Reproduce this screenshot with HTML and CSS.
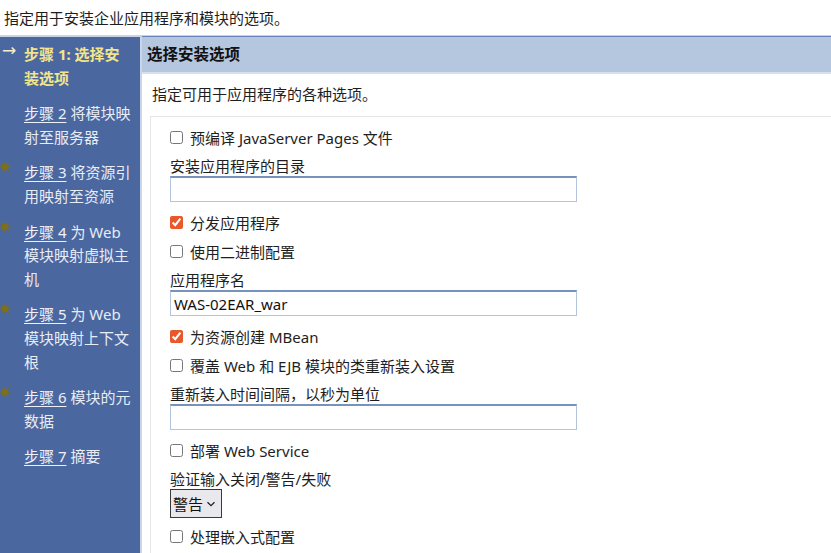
FILE: index.html
```html
<!DOCTYPE html>
<html lang="zh-CN">
<head>
<meta charset="utf-8">
<title>选择安装选项</title>
<link rel="stylesheet" href="styles.css">
</head>
<body>
<p class="intro">指定用于安装企业应用程序和模块的选项。</p>
<div class="main">
  <nav class="steps">
    <div class="step current">
      <span class="marker arrow">→</span>
      <span class="step-text">步骤 1: 选择安装选项</span>
    </div>
    <div class="step">
      <span class="marker"></span>
      <span class="step-text"><a href="#">步骤 2</a> 将模块映射至服务器</span>
    </div>
    <div class="step">
      <span class="marker"><svg class="star" width="12" height="12" viewBox="0 0 12 12"><path d="M6 0L7.2 4.3L12 6L7.2 7.7L6 12L4.8 7.7L0 6L4.8 4.3Z M1.8 1.8L6 4L10.2 1.8L8 6L10.2 10.2L6 8L1.8 10.2L4 6Z"/><circle cx="6" cy="6" r="2.4"/></svg></span>
      <span class="step-text"><a href="#">步骤 3</a> 将资源引用映射至资源</span>
    </div>
    <div class="step">
      <span class="marker"><svg class="star" width="12" height="12" viewBox="0 0 12 12"><path d="M6 0L7.2 4.3L12 6L7.2 7.7L6 12L4.8 7.7L0 6L4.8 4.3Z M1.8 1.8L6 4L10.2 1.8L8 6L10.2 10.2L6 8L1.8 10.2L4 6Z"/><circle cx="6" cy="6" r="2.4"/></svg></span>
      <span class="step-text"><a href="#">步骤 4</a> 为 Web 模块映射虚拟主机</span>
    </div>
    <div class="step">
      <span class="marker"><svg class="star" width="12" height="12" viewBox="0 0 12 12"><path d="M6 0L7.2 4.3L12 6L7.2 7.7L6 12L4.8 7.7L0 6L4.8 4.3Z M1.8 1.8L6 4L10.2 1.8L8 6L10.2 10.2L6 8L1.8 10.2L4 6Z"/><circle cx="6" cy="6" r="2.4"/></svg></span>
      <span class="step-text"><a href="#">步骤 5</a> 为 Web 模块映射上下文根</span>
    </div>
    <div class="step">
      <span class="marker"><svg class="star" width="12" height="12" viewBox="0 0 12 12"><path d="M6 0L7.2 4.3L12 6L7.2 7.7L6 12L4.8 7.7L0 6L4.8 4.3Z M1.8 1.8L6 4L10.2 1.8L8 6L10.2 10.2L6 8L1.8 10.2L4 6Z"/><circle cx="6" cy="6" r="2.4"/></svg></span>
      <span class="step-text"><a href="#">步骤 6</a> 模块的元数据</span>
    </div>
    <div class="step">
      <span class="marker"></span>
      <span class="step-text"><a href="#">步骤 7</a> 摘要</span>
    </div>
  </nav>
  <section class="content">
    <h2 class="header">选择安装选项</h2>
    <p class="desc">指定可用于应用程序的各种选项。</p>
    <div class="box">
      <label class="check"><input type="checkbox"> 预编译 JavaServer Pages 文件</label>
      <div class="field-label">安装应用程序的目录</div>
      <input class="text" type="text" value="">
      <label class="check"><input type="checkbox" checked> 分发应用程序</label>
      <label class="check"><input type="checkbox"> 使用二进制配置</label>
      <div class="field-label">应用程序名</div>
      <input class="text" type="text" value="WAS-02EAR_war">
      <label class="check"><input type="checkbox" checked> 为资源创建 MBean</label>
      <label class="check"><input type="checkbox"> 覆盖 Web 和 EJB 模块的类重新装入设置</label>
      <div class="field-label">重新装入时间间隔，以秒为单位</div>
      <input class="text" type="text" value="">
      <label class="check"><input type="checkbox"> 部署 Web Service</label>
      <div class="field-label">验证输入关闭/警告/失败</div>
      <select class="sel"><option>警告</option><option>关闭</option><option>失败</option></select>
      <label class="check last"><input type="checkbox"> 处理嵌入式配置</label>
    </div>
  </section>
</div>
</body>
</html>
```
FILE: styles.css
```css
html, body {
  margin: 0;
  padding: 0;
  background: #ffffff;
}
body {
  font-family: "Noto Sans", "Noto Sans CJK SC", sans-serif;
  font-size: 15px;
  color: #1e1e1e;
  overflow: hidden;
}
.intro {
  margin: 0;
  padding: 8px 4px 7px;
  line-height: 20px;
  font-size: 15px;
  height: 20px;
}
.main {
  display: flex;
  border-top: 2px solid #c9d3e5;
  min-height: 520px;
}
.steps {
  width: 140px;
  flex: none;
  background: #4b67a0;
  padding: 6px 8px 0 0;
  box-sizing: border-box;
  display: flex;
  flex-direction: column;
  gap: 12px;
}
.step {
  display: grid;
  grid-template-columns: 24px 1fr;
  line-height: 23.6px;
  color: #e8ecf5;
}
.step-text a {
  color: #eef1f8;
  text-decoration: underline;
  text-underline-offset: 3px;
}
.step.current .step-text {
  color: #f2e58a;
  font-weight: 700;
}
.marker {
  display: flex;
  align-items: flex-start;
  justify-content: flex-start;
}
.arrow {
  color: #f4efc6;
  font-size: 17px;
  line-height: 14px;
  padding-left: 2px;
  font-family: "DejaVu Sans", sans-serif;
}
.star {
  fill: #7e6f1c;
  margin: 0 0 0 -1px;
}
.content {
  flex: 1;
  border-left: 2px solid #c9d6ea;
}
.header {
  margin: 0;
  height: 35px;
  line-height: 35px;
  padding-left: 5px;
  font-size: 15.5px;
  font-weight: 700;
  background: #b5c6df;
  color: #111;
  border-top: 1px solid #6683bd;
  margin-top: -1px;
  border-bottom: 2px solid #d6e0ef;
}
.desc {
  margin: 0;
  padding: 10px 0 0 10px;
  line-height: 20px;
  height: 20px;
}
.box {
  margin: 12px 0 0 8px;
  border-top: 1px solid #e6e6e6;
  border-left: 1px solid #e6e6e6;
  padding: 6px 0 20px 19px;
  display: flex;
  flex-direction: column;
  align-items: flex-start;
}
.check {
  display: flex;
  align-items: center;
  height: 29px;
  gap: 4px;
}
.check input {
  margin: 0 3px 0 0;
  width: 13px;
  height: 13px;
  accent-color: #e8582b;
}
.field-label {
  padding-top: 4px;
  line-height: 20px;
}
.text {
  width: 407px;
  height: 26px;
  box-sizing: border-box;
  border: 1px solid #b3c4dc;
  border-top: 2px solid #7892c0;
  padding: 0 3px;
  font-family: "Noto Sans", "Noto Sans CJK SC", sans-serif;
  font-size: 15px;
  color: #111;
  margin-bottom: 6px;
  outline: none;
}
.sel {
  appearance: none;
  -webkit-appearance: none;
  width: 52px;
  height: 29px;
  font-family: "Noto Sans", "Noto Sans CJK SC", sans-serif;
  font-size: 15px;
  color: #111;
  background-color: #e9e9ed;
  background-image: url("data:image/svg+xml,%3Csvg xmlns='http://www.w3.org/2000/svg' width='10' height='6' viewBox='0 0 10 6'%3E%3Cpath d='M1.5 1.2L5 4.6L8.5 1.2' fill='none' stroke='%23222' stroke-width='1.3'/%3E%3C/svg%3E");
  background-repeat: no-repeat;
  background-position: right 5px center;
  border: 1px solid #3a3a3a;
  border-radius: 0;
  padding: 0 16px 0 2px;
  margin-bottom: 4px;
}
```
